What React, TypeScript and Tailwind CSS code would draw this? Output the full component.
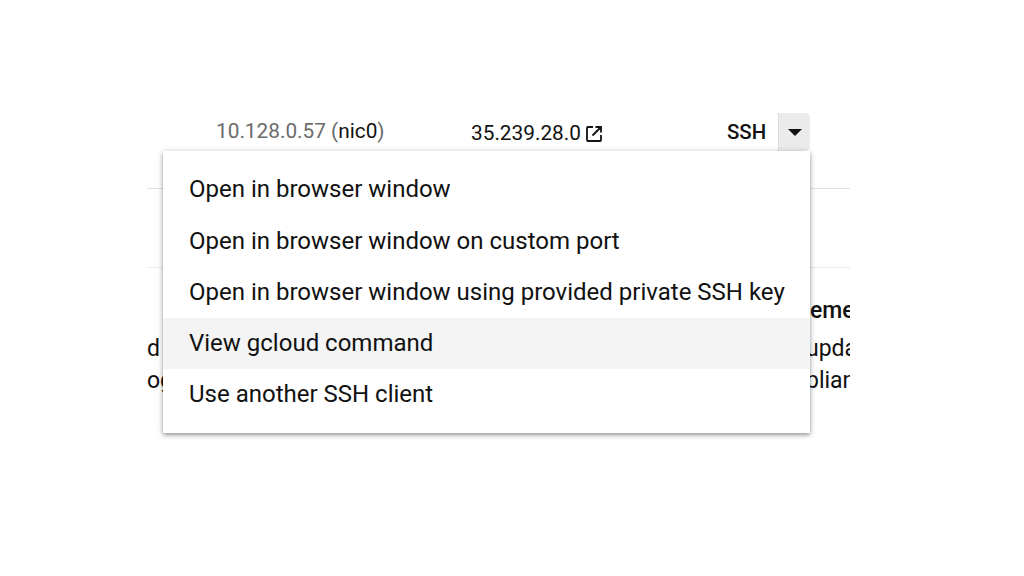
const items = [
  "Open in browser window",
  "Open in browser window on custom port",
  "Open in browser window using provided private SSH key",
  "View gcloud command",
  "Use another SSH client",
];

const ExternalIcon = () => (
  <svg width="18" height="18" viewBox="0 0 18 18" fill="none" stroke="#111" strokeWidth="1.8">
    <path d="M8 2H3a1 1 0 0 0-1 1v12a1 1 0 0 0 1 1h12a1 1 0 0 0 1-1v-5" />
    <path d="M10.5 2H16v5.5M16 2L7.5 10.5" />
  </svg>
);

export default function App() {
  return (
    <div className="relative h-[576px] w-[1024px] overflow-hidden bg-white font-['Roboto',sans-serif] text-[#111]">
      {/* table behind the menu */}
      <div className="ml-[147px] w-[703px] overflow-hidden pt-[113px]">
        <div className="flex h-[76px] border-b border-[#e0e0e0]">
          <div className="ml-[69px] mt-[4px] w-[255px] text-[20.8px] leading-[28px] text-[#6b6b6b]">
            10.128.0.57 (<span className="text-[#111]">nic0</span>)
          </div>
          <div className="mt-[7px] flex h-[28px] w-[256px] items-center gap-[4px] text-[20.8px]">
            35.239.28.0
            <ExternalIcon />
          </div>
          <div className="flex h-[38px] items-center">
            <span className="text-[20.4px] font-medium">SSH</span>
            <div className="ml-[12px] flex h-[38px] w-[32px] items-center justify-center rounded-r-[5px] border-l border-[#dadce0] bg-[#ebebeb]">
              <div className="h-0 w-0 border-x-[7px] border-t-[7px] border-x-transparent border-t-[#111]" />
            </div>
          </div>
        </div>
        <div className="h-[79px] border-b border-[#e8eaed]" />
        <div className="flex justify-between pt-[27px] text-[23px] leading-[32px]">
          <div className="w-[30px]">
            <div className="h-[38px]" />
            <div>d</div>
            <div>og</div>
          </div>
          <div className="w-[44px]">
            <div className="h-[38px] pl-[4px] font-medium">eme</div>
            <div className="whitespace-nowrap">upda</div>
            <div className="whitespace-nowrap">plian</div>
          </div>
        </div>
      </div>

      {/* ssh dropdown */}
      <div className="absolute left-[163px] top-[151px] w-[647px] bg-white py-[13px] shadow-[0_2px_4px_rgba(0,0,0,0.35),0_1px_8px_rgba(0,0,0,0.12)]">
        {items.map((item) => (
          <div
            key={item}
            className={`flex h-[51.2px] items-center whitespace-nowrap px-[26px] pb-[0.4px] text-[24px] ${item === "View gcloud command" ? "bg-[#f4f4f4]" : ""}`}
          >
            {item}
          </div>
        ))}
      </div>
    </div>
  );
}
